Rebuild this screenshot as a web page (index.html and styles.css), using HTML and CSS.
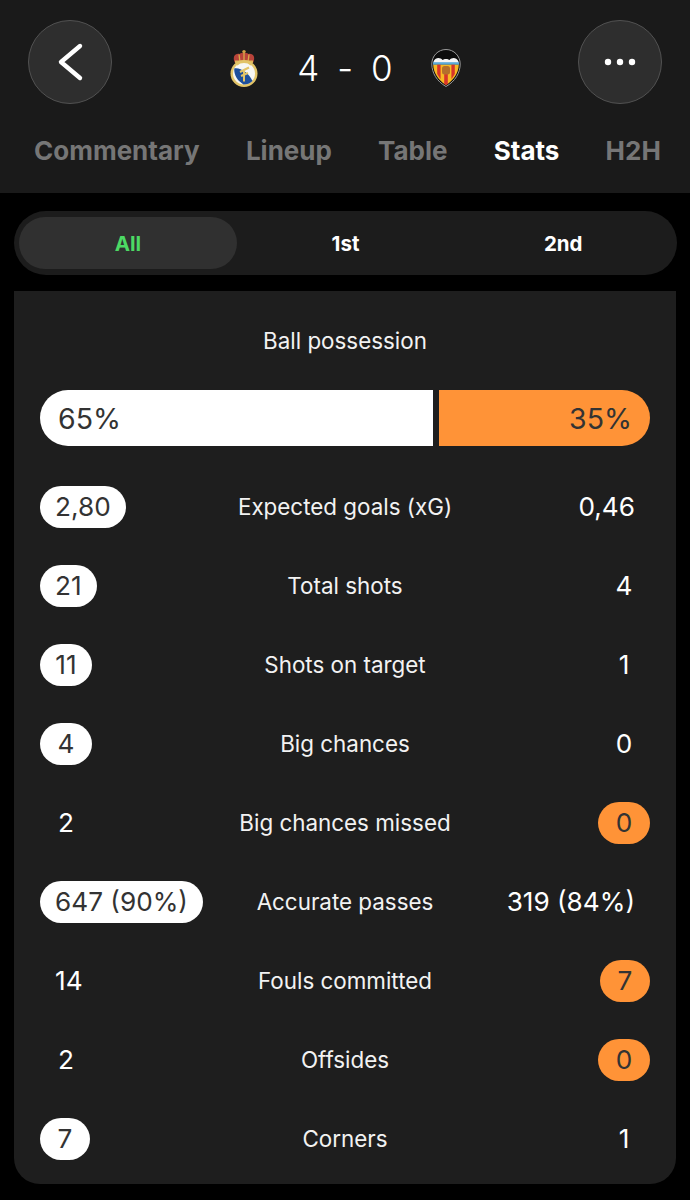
FILE: index.html
```html
<!DOCTYPE html>
<html lang="en">
<head>
<meta charset="utf-8">
<title>Real Madrid 4 - 0 Valencia</title>
<link rel="stylesheet" href="styles.css">
</head>
<body>
<header class="header">
  <div class="top">
    <button class="round" aria-label="Back">
      <svg width="28" height="40" viewBox="0 0 28 40"><path d="M24 4 L5 20 L24 36" fill="none" stroke="#fff" stroke-width="4.4" stroke-linecap="round" stroke-linejoin="round"/></svg>
    </button>
    <div class="match">
      <svg class="crest" width="30" height="38" viewBox="0 0 30 38">
        <path d="M6 14 C3 8 6 4 10.5 5 C12 3.8 13.5 3.8 15 3.8 C16.5 3.8 18 3.8 19.5 5 C24 4 27 8 24 14 Z" fill="#b8433a"/>
        <circle cx="15" cy="2.6" r="1.7" fill="#d0a045"/>
        <path d="M15 4 V13 M10 5.5 L11 13 M20 5.5 L19 13" stroke="#d9ab4a" stroke-width="1.3"/>
        <rect x="6" y="11.5" width="18" height="2.4" fill="#e0b85a"/>
        <circle cx="15" cy="24.5" r="13.5" fill="#e2c468"/>
        <circle cx="15" cy="24.5" r="11" fill="#f7f7f3"/>
        <path d="M5.2 19.5 C11 18 20 24 23.5 32 C21 34.5 18 35.5 14.5 35.5 C9 32 5 27 5.2 19.5 Z" fill="#1d4f9c"/>
        <path d="M11 23 L20 18.5 M12 27 L19 24 M15 22 L15 32.5" stroke="#e2c468" stroke-width="2"/>
        <path d="M8 16 C11 12.5 19 12.5 22 16" fill="none" stroke="#e2c468" stroke-width="1.4"/>
      </svg>
      <div class="score"><span>4</span><span class="dash">-</span><span>0</span></div>
      <svg class="crest" width="30" height="38" viewBox="0 0 30 38">
        <path d="M15 37.5 C6 32.5 .8 24 .8 15 C.8 7 7 .5 15 .5 C23 .5 29.2 7 29.2 15 C29.2 24 24 32.5 15 37.5 Z" fill="#0c0c0c" stroke="#9a9a9a" stroke-width="1"/>
        <path d="M2.5 12.5 C5 8 9 8.5 11.5 11 C13 9.5 17 9.5 18.5 11 C21 8.5 25 8 27.5 12.5 L27.8 15 L2.2 15 Z" fill="#f6f6f6"/>
        <rect x="2" y="13.2" width="26" height="2.6" fill="#5aa9d8"/>
        <path d="M2.2 15.8 H27.8 C27.6 24 22.5 31.5 15 36 C7.5 31.5 2.4 24 2.2 15.8 Z" fill="#f7b824"/>
        <path d="M6.2 15.8 H9.6 V30 C8 28.2 7 26.4 6.2 25 Z M20.4 15.8 H23.8 V25 C23 26.4 22 28.2 20.4 30 Z M13.2 25 H16.8 V35 L15 36 L13.2 35 Z" fill="#d8342a"/>
        <rect x="11" y="17" width="8" height="8.5" rx="2.5" fill="#b56f2b"/>
      </svg>
    </div>
    <button class="round" aria-label="More">
      <svg width="32" height="8" viewBox="0 0 32 8"><circle cx="4" cy="4" r="3.2" fill="#fff"/><circle cx="16" cy="4" r="3.2" fill="#fff"/><circle cx="28" cy="4" r="3.2" fill="#fff"/></svg>
    </button>
  </div>
  <nav class="tabs">
    <span>Commentary</span>
    <span>Lineup</span>
    <span>Table</span>
    <span class="on">Stats</span>
    <span>H2H</span>
  </nav>
</header>

<div class="segment">
  <div class="seg active">All</div>
  <div class="seg">1st</div>
  <div class="seg">2nd</div>
</div>

<main class="card">
  <h2 class="title">Ball possession</h2>
  <div class="bar">
    <div class="bar-home">65%</div>
    <div class="bar-away">35%</div>
  </div>
  <div class="row"><div class="left"><span class="val win-home">2,80</span></div><div class="label">Expected goals (xG)</div><div class="right"><span class="val">0,46</span></div></div>
  <div class="row"><div class="left"><span class="val win-home">21</span></div><div class="label">Total shots</div><div class="right"><span class="val">4</span></div></div>
  <div class="row"><div class="left"><span class="val win-home">11</span></div><div class="label">Shots on target</div><div class="right"><span class="val">1</span></div></div>
  <div class="row"><div class="left"><span class="val win-home">4</span></div><div class="label">Big chances</div><div class="right"><span class="val">0</span></div></div>
  <div class="row"><div class="left"><span class="val">2</span></div><div class="label">Big chances missed</div><div class="right"><span class="val win-away">0</span></div></div>
  <div class="row"><div class="left"><span class="val win-home">647 (90%)</span></div><div class="label">Accurate passes</div><div class="right"><span class="val">319 (84%)</span></div></div>
  <div class="row"><div class="left"><span class="val">14</span></div><div class="label">Fouls committed</div><div class="right"><span class="val win-away narrow">7</span></div></div>
  <div class="row"><div class="left"><span class="val">2</span></div><div class="label">Offsides</div><div class="right"><span class="val win-away">0</span></div></div>
  <div class="row"><div class="left"><span class="val win-home narrow">7</span></div><div class="label">Corners</div><div class="right"><span class="val">1</span></div></div>
</main>
</body>
</html>
```

FILE: styles.css
```css
* { box-sizing: border-box; }
html, body { margin: 0; padding: 0; }
body {
  width: 690px;
  height: 1200px;
  overflow: hidden;
  background: #000;
  color: #fff;
  font-family: Inter, "Liberation Sans", sans-serif;
}
.header {
  height: 193px;
  padding: 20px 28px 0;
  background: #1a1a1a;
}
.top {
  display: flex;
  justify-content: space-between;
  align-items: flex-start;
}
.round {
  width: 84px;
  height: 84px;
  padding: 0;
  border-radius: 50%;
  border: 1.5px solid #525252;
  background: #2e2e2e;
  display: flex;
  align-items: center;
  justify-content: center;
}
.match {
  display: flex;
  align-items: center;
  gap: 38px;
  margin-top: 29px;
}
.crest { display: block; }
.score {
  display: flex;
  align-items: center;
  gap: 18px;
  font-size: 35px;
  font-weight: 300;
  line-height: 38px;
}
.tabs {
  display: flex;
  gap: 46.2px;
  margin-top: 29px;
  margin-left: 6px;
  font-size: 26px;
  font-weight: 700;
  line-height: 36px;
  color: #767676;
  white-space: nowrap;
}
.tabs .on { color: #fff; }
.segment {
  display: flex;
  margin: 18px 13px 0 14px;
  height: 64px;
  padding: 6px 5px;
  border-radius: 32px;
  background: #1c1c1c;
}
.seg {
  flex: 1;
  display: flex;
  align-items: center;
  justify-content: center;
  border-radius: 26px;
  font-size: 20.5px;
  font-weight: 700;
}
.seg.active {
  background: #303030;
  color: #4cd964;
}
.card {
  margin: 16px 14px 0;
  height: 893px;
  padding: 0 26px;
  background: #1e1e1e;
  border-radius: 0 0 26px 26px;
}
.title {
  margin: 0;
  padding-top: 36px;
  height: 99px;
  text-align: center;
  font-size: 22.4px;
  line-height: 28px;
  font-weight: 400;
  color: #f2f2f2;
}
.bar {
  display: flex;
  gap: 6px;
  height: 56px;
  margin-bottom: 21px;
  font-size: 28.5px;
  color: #333;
}
.bar-home, .bar-away {
  display: flex;
  align-items: center;
}
.bar-home {
  flex: 0 0 393px;
  padding-left: 18px;
  background: #fff;
  border-radius: 28px 0 0 28px;
}
.bar-away {
  flex: 1;
  justify-content: flex-end;
  padding-right: 18px;
  background: #ff9337;
  border-radius: 0 28px 28px 0;
}
.row {
  display: grid;
  grid-template-columns: 1fr auto 1fr;
  align-items: center;
  height: 79px;
}
.left { justify-self: start; }
.right { justify-self: end; }
.label {
  text-align: center;
  font-size: 22.4px;
  color: #f2f2f2;
  white-space: nowrap;
}
.val {
  display: block;
  min-width: 52px;
  height: 42px;
  padding: 0 15px;
  border-radius: 21px;
  font-size: 26.2px;
  line-height: 42px;
  text-align: center;
  white-space: nowrap;
}
.val.narrow { min-width: 50px; }
.win-home { background: #fff; color: #333; }
.win-away { background: #ff9337; color: #333; }
```
